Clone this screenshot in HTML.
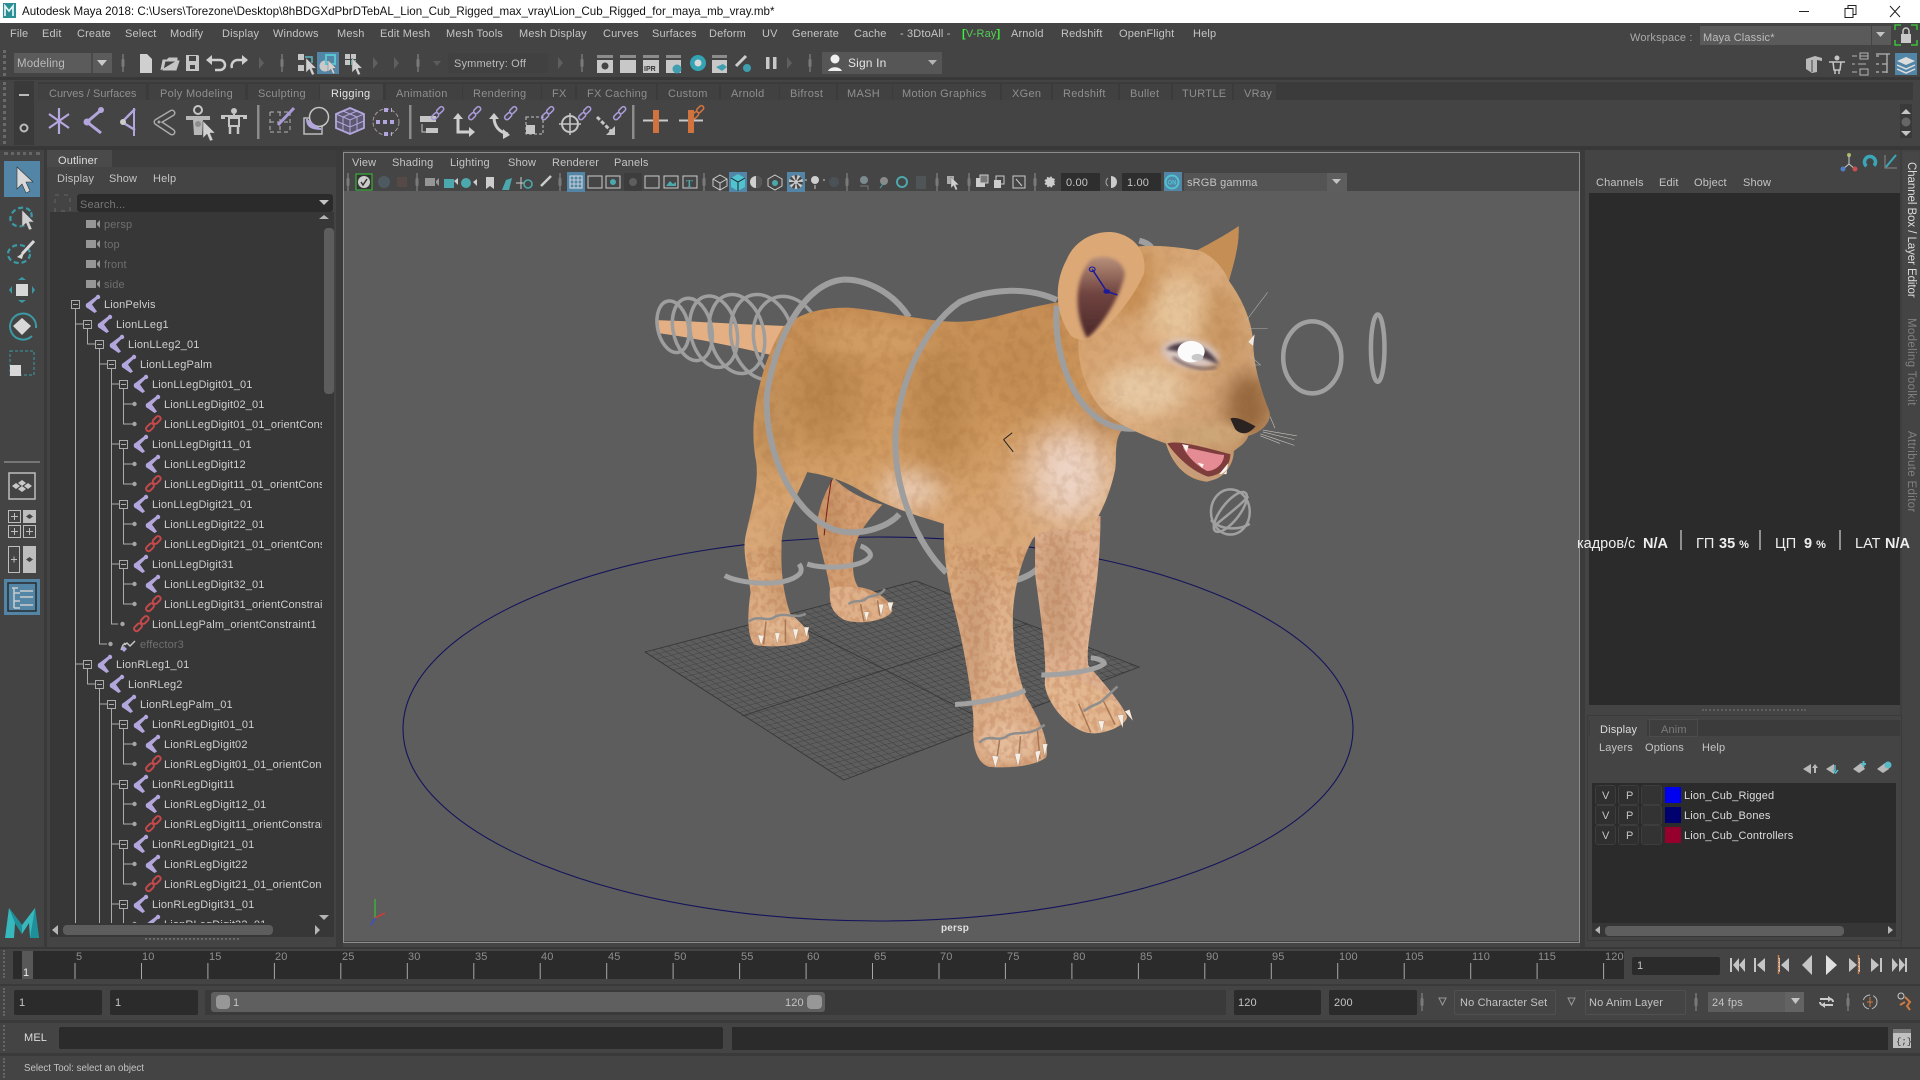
<!DOCTYPE html>
<html><head><meta charset="utf-8"><title>Autodesk Maya 2018</title>
<style>
html,body{margin:0;padding:0;width:1920px;height:1080px;overflow:hidden;background:#444;}
body{position:relative;font:11px/14px "Liberation Sans","Noto Sans CJK SC",sans-serif;color:#c8c8c8}
.b{position:absolute}
.t{position:absolute;white-space:nowrap;font:11px/14px "Liberation Sans","Noto Sans CJK SC",sans-serif;color:#c4c4c4;margin-top:1px;letter-spacing:.15px}
.d{color:#8f8f8f}.v{color:#6f6f6f}
.s{letter-spacing:.3px}
.f{position:absolute;background:#2b2b2b;border-radius:2px}
.h{position:absolute;white-space:nowrap;font:14.5px/18px "Liberation Sans",sans-serif;color:#eee}
.h b{font-weight:bold}
.vt{position:absolute;white-space:nowrap;font:11.5px/14px "Liberation Sans",sans-serif;transform-origin:0 0;transform:rotate(90deg);letter-spacing:.35px}
#tree .t{color:#cfcfcf}
</style></head><body>

<!-- panels -->
<div class="b" style="left:0;top:0;width:1920px;height:23px;background:#fff"></div>
<div class="b" style="left:0;top:77px;width:1920px;height:3px;background:#383838"></div>
<div class="b" style="left:0;top:146px;width:1920px;height:4px;background:#383838"></div>
<div class="b" style="left:14px;top:81px;width:20px;height:64px;background:#3a3a3a"></div>
<div class="b" style="left:3px;top:50px;height:26px;border-left:3px dotted #6a6a6a"></div>
<div class="b" style="left:3px;top:82px;height:62px;border-left:3px dotted #6a6a6a"></div>
<div class="b" style="left:38px;top:82px;width:1875px;height:18px;background:#3b3b3b"></div>
<!-- shelf tabs -->
<div class="b" style="left:38px;top:84px;width:108px;height:16px;background:#414141"></div>
<div class="b" style="left:149px;top:84px;width:96px;height:16px;background:#414141"></div>
<div class="b" style="left:248px;top:84px;width:71px;height:16px;background:#414141"></div>
<div class="b" style="left:320px;top:84px;width:63px;height:16px;background:#474747"></div>
<div class="b" style="left:386px;top:84px;width:76px;height:16px;background:#414141"></div>
<div class="b" style="left:463px;top:84px;width:78px;height:16px;background:#414141"></div>
<div class="b" style="left:542px;top:84px;width:33px;height:16px;background:#414141"></div>
<div class="b" style="left:577px;top:84px;width:79px;height:16px;background:#414141"></div>
<div class="b" style="left:658px;top:84px;width:61px;height:16px;background:#414141"></div>
<div class="b" style="left:721px;top:84px;width:58px;height:16px;background:#414141"></div>
<div class="b" style="left:780px;top:84px;width:56px;height:16px;background:#414141"></div>
<div class="b" style="left:838px;top:84px;width:54px;height:16px;background:#414141"></div>
<div class="b" style="left:893px;top:84px;width:107px;height:16px;background:#414141"></div>
<div class="b" style="left:1002px;top:84px;width:49px;height:16px;background:#414141"></div>
<div class="b" style="left:1053px;top:84px;width:65px;height:16px;background:#414141"></div>
<div class="b" style="left:1120px;top:84px;width:51px;height:16px;background:#414141"></div>
<div class="b" style="left:1173px;top:84px;width:59px;height:16px;background:#414141"></div>
<div class="b" style="left:1234px;top:84px;width:42px;height:16px;background:#414141"></div>

<!-- top controls -->
<div class="b" style="left:14px;top:53px;width:98px;height:20px;background:#5b5b5b"></div>
<div class="b" style="left:91px;top:53px;width:2px;height:20px;background:#4a4a4a"></div>
<div class="b" style="left:448px;top:53px;width:100px;height:20px;background:#414141;border-radius:3px"></div>
<div class="b" style="left:822px;top:52px;width:120px;height:22px;background:#565656"></div>
<div class="b" style="left:317px;top:52px;width:22px;height:22px;background:#5285a6"></div>
<div class="b" style="left:1700px;top:26px;width:191px;height:19px;background:#5a5a5a"></div>
<div class="b" style="left:1871px;top:26px;width:1px;height:19px;background:#444"></div>
<div class="b" style="left:1895px;top:53px;width:22px;height:22px;background:#5285a6"></div>
<div class="b" style="left:1900px;top:104px;width:12px;height:34px;background:#3a3a3a"></div>

<!-- left toolbar + outliner -->
<div class="b" style="left:44px;top:150px;width:3px;height:797px;background:#3a3a3a"></div>
<div class="b" style="left:4px;top:152px;height:3px;width:36px;border-top:3px dotted #666"></div>
<div class="b" style="left:4px;top:161px;width:36px;height:36px;background:#5285a6"></div>
<div class="b" style="left:4px;top:579px;width:36px;height:36px;background:#5285a6"></div>
<div class="b" style="left:4px;top:461px;width:36px;height:2px;background:#777"></div>
<div class="b" style="left:47px;top:150px;width:296px;height:797px;background:#444"></div>
<div class="b" style="left:47px;top:150px;width:65px;height:17px;background:#4a4a4a"></div>
<div class="b" style="left:112px;top:150px;width:224px;height:17px;background:#3d3d3d"></div>
<div class="b" style="left:336px;top:150px;width:7px;height:797px;background:#3b3b3b"></div>
<div class="b" style="left:50px;top:212px;width:284px;height:725px;background:#373737"></div>
<div class="b" style="left:77px;top:194px;width:256px;height:18px;background:#2b2b2b;border-radius:3px"></div>
<div class="b" style="left:324px;top:228px;width:10px;height:166px;background:#5d5d5d;border-radius:4px"></div>
<div class="b" style="left:63px;top:925px;width:210px;height:10px;background:#5d5d5d;border-radius:4px"></div>
<div class="b" style="left:145px;top:938px;width:94px;height:2px;border-top:2px dotted #6a6a6a"></div>

<!-- viewport panel -->
<div class="b" style="left:343px;top:152px;width:1235px;height:789px;border:1px solid #8c8c8c;background:#454545"></div>
<div class="b" style="left:344px;top:191px;width:1235px;height:750px;background:#5d5d5d"></div>
<div class="b" style="left:1580px;top:150px;width:5px;height:797px;background:#3b3b3b"></div>

<!-- right panel -->
<div class="b" style="left:1589px;top:193px;width:311px;height:512px;background:#2b2b2b"></div>
<div class="b" style="left:1900px;top:150px;width:2px;height:797px;background:#3f3f3f"></div>
<div class="b" style="left:1702px;top:709px;width:104px;height:2px;border-top:2px dotted #5f5f5f"></div>
<div class="b" style="left:1588px;top:716px;width:313px;height:224px;background:#444;outline:1px solid #3a3a3a"></div>
<div class="b" style="left:1589px;top:720px;width:311px;height:16px;background:#3b3b3b"></div>
<div class="b" style="left:1590px;top:720px;width:57px;height:16px;background:#444"></div>
<div class="b" style="left:1650px;top:720px;width:47px;height:16px;background:#3e3e3e;outline:1px solid #4c4c4c"></div>
<div class="b" style="left:1592px;top:783px;width:304px;height:140px;background:#2b2b2b"></div>
<div class="b" style="left:1592px;top:923px;width:304px;height:14px;background:#363636"></div>
<div class="b" style="left:1605px;top:926px;width:239px;height:10px;background:#5e5e5e;border-radius:4px"></div>
<div class="b" style="left:1596px;top:786px;width:19px;height:18px;background:#2f2f2f;outline:1px solid #3d3d3d;border-radius:2px"></div>
<div class="b" style="left:1619px;top:786px;width:19px;height:18px;background:#2f2f2f;outline:1px solid #3d3d3d;border-radius:2px"></div>
<div class="b" style="left:1642px;top:786px;width:19px;height:18px;background:#333;outline:1px solid #3d3d3d;border-radius:2px"></div>
<div class="b" style="left:1596px;top:806px;width:19px;height:18px;background:#2f2f2f;outline:1px solid #3d3d3d;border-radius:2px"></div>
<div class="b" style="left:1619px;top:806px;width:19px;height:18px;background:#2f2f2f;outline:1px solid #3d3d3d;border-radius:2px"></div>
<div class="b" style="left:1642px;top:806px;width:19px;height:18px;background:#333;outline:1px solid #3d3d3d;border-radius:2px"></div>
<div class="b" style="left:1596px;top:826px;width:19px;height:18px;background:#2f2f2f;outline:1px solid #3d3d3d;border-radius:2px"></div>
<div class="b" style="left:1619px;top:826px;width:19px;height:18px;background:#2f2f2f;outline:1px solid #3d3d3d;border-radius:2px"></div>
<div class="b" style="left:1642px;top:826px;width:19px;height:18px;background:#333;outline:1px solid #3d3d3d;border-radius:2px"></div>
<div class="b" style="left:1665px;top:787px;width:16px;height:16px;background:#0000f0"></div>
<div class="b" style="left:1665px;top:807px;width:16px;height:16px;background:#00006e"></div>
<div class="b" style="left:1665px;top:827px;width:16px;height:16px;background:#96002c"></div>
<div class="b" style="left:1903px;top:152px;width:16px;height:128px;background:#474747"></div>

<!-- bottom -->
<div class="b" style="left:0;top:947px;width:1920px;height:2px;background:#383838"></div>
<div class="b" style="left:0;top:984px;width:1920px;height:2px;background:#3a3a3a"></div>
<div class="b" style="left:0;top:1020px;width:1920px;height:3px;background:#3a3a3a"></div>
<div class="b" style="left:0;top:1053px;width:1920px;height:3px;background:#3a3a3a"></div>
<div class="f" style="left:13px;top:951px;width:1611px;height:28px;border-radius:0"></div>
<div class="b" style="left:22px;top:951px;width:11px;height:28px;background:#585858"></div>
<div class="f" style="left:1632px;top:957px;width:88px;height:18px"></div>
<div class="f" style="left:14px;top:990px;width:88px;height:25px"></div>
<div class="f" style="left:110px;top:990px;width:88px;height:25px"></div>
<div class="b" style="left:205px;top:990px;width:1021px;height:25px;background:#3a3a3a"></div>
<div class="b" style="left:211px;top:992px;width:614px;height:20px;background:#5f5f5f;border-radius:3px"></div>
<div class="b" style="left:216px;top:995px;width:14px;height:14px;background:#979797;border-radius:4px"></div>
<div class="b" style="left:807px;top:995px;width:15px;height:14px;background:#979797;border-radius:4px"></div>
<div class="f" style="left:1234px;top:990px;width:87px;height:25px"></div>
<div class="f" style="left:1329px;top:990px;width:88px;height:25px"></div>
<div class="b" style="left:1454px;top:990px;width:100px;height:23px;border:1px solid #505050;border-radius:2px"></div>
<div class="b" style="left:1585px;top:990px;width:99px;height:23px;border:1px solid #505050;border-radius:2px"></div>
<div class="b" style="left:1708px;top:992px;width:96px;height:20px;background:#5c5c5c"></div>
<div class="b" style="left:1785px;top:992px;width:19px;height:20px;background:#636363"></div>
<div class="f" style="left:59px;top:1027px;width:664px;height:22px"></div>
<div class="f" style="left:732px;top:1027px;width:1156px;height:23px;border-radius:0"></div>
<div class="b" style="left:3px;top:950px;height:28px;border-left:2px dotted #666"></div>
<div class="b" style="left:3px;top:988px;height:28px;border-left:2px dotted #666"></div>
<div class="b" style="left:3px;top:1025px;height:26px;border-left:2px dotted #666"></div>
<div class="b" style="left:3px;top:1058px;height:20px;border-left:2px dotted #666"></div>

<!-- master svg -->
<svg class="b" style="left:0;top:0" width="1920" height="1080" viewBox="0 0 1920 1080" xmlns="http://www.w3.org/2000/svg">
<defs>
<filter id="b4" x="-20%" y="-20%" width="140%" height="140%"><feGaussianBlur stdDeviation="4"/></filter>
<filter id="b8" x="-30%" y="-30%" width="160%" height="160%"><feGaussianBlur stdDeviation="8"/></filter>
<filter id="b20" x="-40%" y="-40%" width="180%" height="180%"><feGaussianBlur stdDeviation="22"/></filter>
<filter id="b40" x="-60%" y="-60%" width="220%" height="220%"><feGaussianBlur stdDeviation="42"/></filter>
<filter id="fur" x="0" y="0" width="100%" height="100%" color-interpolation-filters="sRGB"><feTurbulence type="fractalNoise" baseFrequency=".05 .035" numOctaves="3" seed="7"/><feColorMatrix values="0 0 0 0 .55  0 0 0 0 .33  0 0 0 0 .16  3.6 0 0 0 -1.55"/></filter>
<filter id="fur2" x="0" y="0" width="100%" height="100%" color-interpolation-filters="sRGB"><feTurbulence type="fractalNoise" baseFrequency=".09 .06" numOctaves="2" seed="3"/><feColorMatrix values="0 0 0 0 .66  0 0 0 0 .38  0 0 0 0 .24  5 0 0 0 -2.2"/></filter>
<linearGradient id="bg" x1="0" y1="0" x2="0" y2="1"><stop offset="0" stop-color="#c68f56"/><stop offset=".28" stop-color="#d09a60"/><stop offset=".5" stop-color="#d9a878"/><stop offset=".75" stop-color="#dcae88"/><stop offset="1" stop-color="#d8a882"/></linearGradient>
<linearGradient id="hg" x1="0" y1="0" x2="1" y2="1"><stop offset="0" stop-color="#cf9a62"/><stop offset=".5" stop-color="#dcae80"/><stop offset="1" stop-color="#bf9266"/></linearGradient>
<linearGradient id="eg" x1="0" y1="0" x2="0" y2="1"><stop offset="0" stop-color="#b9907a"/><stop offset=".45" stop-color="#704440"/><stop offset="1" stop-color="#4a2729"/></linearGradient>
<path id="bodyp" d="M295,305 C330,270 370,255 430,255 C500,262 580,290 650,292 C720,295 780,255 870,240 L1000,300 L1000,570 C975,590 985,650 980,680 C970,740 950,800 925,840 C870,830 830,830 810,860 C780,930 765,1030 770,1100 C770,1170 785,1230 795,1270 C830,1340 845,1400 838,1430 C820,1450 770,1460 720,1455 C695,1445 685,1400 688,1350 C690,1300 670,1150 650,1050 C635,980 625,900 627,820 C560,795 500,770 450,730 C410,700 370,690 345,685 C320,760 290,820 292,880 C290,940 295,1000 310,1055 C345,1090 355,1115 345,1125 C320,1140 260,1145 235,1135 C220,1110 222,1050 228,1000 C225,950 210,900 218,850 C230,780 245,720 240,660 C232,610 232,560 240,500 C250,430 265,370 295,305 Z"/>
<path id="headp" d="M1030,95 C1080,90 1120,100 1150,105 C1180,85 1215,60 1235,42 C1237,90 1225,140 1215,185 C1240,230 1260,280 1265,340 C1265,400 1280,470 1298,525 C1305,550 1285,580 1255,590 C1250,610 1235,620 1225,630 C1225,670 1200,700 1170,710 C1130,705 1100,670 1085,610 C1040,590 1000,570 960,530 C920,480 900,400 905,330 C920,200 960,110 1030,95Z"/>
<path id="ffl" d="M815,800 L950,800 C950,880 945,960 935,1040 C930,1100 920,1150 925,1190 C960,1240 1000,1300 1005,1325 C1000,1350 950,1375 920,1365 C880,1350 840,1290 835,1240 C840,1160 825,1050 815,950Z"/>
<path id="fbl" d="M400,700 C430,740 470,760 500,770 C470,810 445,850 440,900 C438,940 440,965 450,985 C490,990 525,1030 520,1050 C505,1075 450,1085 420,1070 C395,1050 390,1030 392,990 C385,930 365,860 365,820 C370,770 385,730 400,700Z"/>
<clipPath id="bc"><use href="#bodyp"/></clipPath>
<clipPath id="hc"><use href="#headp"/></clipPath>
<clipPath id="fc"><use href="#ffl"/><use href="#fbl"/></clipPath>
<clipPath id="gc"><path d="M645,652 L916,581 L1139,667 L844,780Z"/></clipPath>
<pattern id="gp" patternUnits="userSpaceOnUse" width="10" height="10" patternTransform="matrix(.553 .356 .753 -.197 645 652)"><path d="M0 0H10M0 0V10" stroke="#3a3a3a" stroke-width="1.500" fill="none"/></pattern>
<g id="j" fill="#b3a6dc"><path d="M-1 0L9-7.500 11-5.500 5 .5 10 7.500 7.500 9-1 3z"/><circle cx="11" cy="-7" r="2.200"/><circle cx="1.500" cy="1.500" r="2.800"/></g>
<g id="l" fill="none" stroke="#c4494b" stroke-width="2"><rect x="0" y="1" width="9" height="5" rx="2.500" transform="rotate(-45 4 4)"/><rect x="6" y="-6" width="9" height="5" rx="2.500" transform="rotate(-45 10 -4)"/></g>
<g id="pl" fill="none" stroke="#a99ad6" stroke-width="1.600"><rect x="0" y="1" width="8" height="4.500" rx="2.200" transform="rotate(-45 4 3)"/><rect x="5" y="-5" width="8" height="4.500" rx="2.200" transform="rotate(-45 9 -3)"/></g>
<g id="cam" fill="#969696"><rect x="0" y="-4" width="10" height="8"/><path d="M11-1L14-4V4L11 1z"/></g>
<g id="grip" fill="#7a7a7a"><rect x="-.7" y="-9" width="1.400" height="18"/><rect x="-1.500" y="-4" width="3" height="8" rx="1"/></g>
<path id="tri" d="M0-6L5 0 0 6z" fill="#5f5f5f"/>
<path id="ar" d="M0 0L0 17 4 13 7 20 10 19 7 12 12 12z" fill="#d0d0d0" stroke="#555" stroke-width=".5"/>
</defs>

<!-- title bar icon -->
<rect x="3" y="3" width="13" height="15" fill="#2b8f96"/><path d="M5 16V6l4 5 4-5v10" fill="none" stroke="#e6f6f6" stroke-width="1.700"/>
<path d="M1799 11.500H1809" stroke="#222" stroke-width="1"/>
<path d="M1845 8.500h8v9h-8zM1848 8.500v-3h8v9h-3" fill="none" stroke="#222"/>
<path d="M1890 6L1900 17M1900 6L1890 17" stroke="#222"/>

<!-- toolbar row icons -->
<path d="M97 60H107L102 66z" fill="#c9c9c9"/>
<use href="#grip" x="123" y="63"/>
<path d="M140 54h7l5 5v14h-12z" fill="#cfcfcf"/>
<path d="M161 70l2-10h4l2-2h8v3h-12l-2 9h13l3-9h-3" fill="#c5c5c5" stroke="#c5c5c5"/>
<path d="M186 55h12l1 1v15h-13z" fill="#c5c5c5"/><rect x="189" y="56" width="7" height="5" fill="#444"/><rect x="190" y="65" width="5" height="4" fill="#444"/>
<path d="M208 60h12a5 5 0 0 1 0 10h-5" fill="none" stroke="#cfcfcf" stroke-width="2.500"/><path d="M206 60l6-5v10z" fill="#cfcfcf"/>
<path d="M247 60h-9a6 6 0 0 0-6 8" fill="none" stroke="#cfcfcf" stroke-width="2.500"/><path d="M248 60l-6-5v10z" fill="#cfcfcf"/>
<use href="#tri" x="259" y="63"/><use href="#grip" x="282" y="63"/>
<rect x="298" y="54" width="6" height="6" fill="#c5c5c5"/><rect x="298" y="65" width="6" height="6" fill="#c5c5c5"/><path d="M305 57h7v6" fill="none" stroke="#59b9c5" stroke-width="1.500"/>
<use href="#ar" transform="translate(306 58) scale(.85)"/>
<circle cx="325" cy="66" r="5.500" fill="#c9c9c9"/><rect x="326" y="55" width="9" height="9" fill="none" stroke="#59c6cf" stroke-width="2"/><use href="#ar" transform="translate(328 60) scale(.7)"/>
<rect x="345" y="54" width="5" height="5" fill="#c5c5c5"/><rect x="351" y="54" width="5" height="5" fill="#c5c5c5"/><rect x="345" y="60" width="5" height="5" fill="#c5c5c5"/><rect x="351" y="60" width="5" height="5" fill="#6cb"/>
<use href="#ar" transform="translate(352 58) scale(.85)"/>
<use href="#tri" x="373" y="63"/><use href="#tri" x="394" y="63"/><use href="#grip" x="418" y="63"/>
<path d="M433 61h8l-4 5z" fill="#5c5c5c"/>
<use href="#tri" x="558" y="63"/><use href="#grip" x="582" y="63"/>
<g fill="#c8c8c8"><rect x="597" y="60" width="16" height="13"/><rect x="620" y="60" width="16" height="13"/><rect x="643" y="60" width="16" height="13"/><rect x="666" y="60" width="15" height="13"/><rect x="712" y="60" width="15" height="13"/>
<path d="M597 55h16v3h-16zM620 55h16v3h-16zM643 55h16v3h-16zM666 55h15v3h-15zM712 55h15v3h-15z" opacity=".55"/><rect x="766" y="57" width="3.500" height="12"/><rect x="773" y="57" width="3.500" height="12"/></g>
<circle cx="605" cy="66" r="3.500" fill="#444"/><text x="644" y="71" style="font:bold 7px 'Liberation Sans',sans-serif" fill="#333">IPR</text>
<circle cx="677" cy="69" r="4.500" fill="#3f9fae"/>
<circle cx="698" cy="63" r="8" fill="#34a3b3"/><circle cx="698" cy="63" r="3.500" fill="#d8d8d8"/>
<path d="M716 67l7-3 4 3-5 4z" fill="#3f9fae"/>
<path d="M736 66l10-10" stroke="#ccc" stroke-width="3"/><circle cx="747" cy="68" r="4" fill="#3f9fae"/>
<use href="#tri" x="787" y="63"/><use href="#grip" x="810" y="63"/>
<circle cx="835" cy="59" r="4.500" fill="#efefef"/><path d="M828 71c2-5 12-5 14 0z" fill="#efefef"/>
<path d="M928 60h9l-4.500 5z" fill="#b5b5b5"/>

<!-- right top icons -->
<path d="M1876 32h9l-4.500 5z" fill="#c4c4c4"/>
<path d="M1895 30v-5h6M1917 30v-5h-6M1895 40v5h6M1917 40v5h-6" fill="none" stroke="#3ed23e" stroke-width="1.300"/>
<rect x="1901" y="34" width="10" height="9" fill="#c9c9c9"/><path d="M1903 34v-3a3 3 0 0 1 6 0v3" fill="none" stroke="#c9c9c9" stroke-width="1.500"/>
<path d="M1806 59l9-3 7 2v3l-5-1v12l-5 1-6-4z" fill="#b9b9b9"/><path d="M1812 60v12" stroke="#444"/>
<circle cx="1837" cy="58" r="2.500" fill="#c5c5c5"/><path d="M1829 62h16M1833 62l1 8h6l1-8M1835 70v4M1839 70v4" fill="none" stroke="#c5c5c5" stroke-width="1.500"/>
<path d="M1852 56h5M1860 56h8M1860 53h8v6h-8zM1852 64h3M1858 64h8M1852 72h5M1860 69h8v6h-8z" stroke="#b5b5b5" fill="none"/>
<path d="M1876 54h14l-3 0v19M1876 56h3M1876 64h3M1876 72h3M1882 64h5M1882 72h5" stroke="#b5b5b5" fill="none" stroke-width="1.300"/>
<path d="M1906 57l9 4-9 4-9-4z" fill="#ddd"/><path d="M1897 65l9 4 9-4M1897 69l9 4 9-4" fill="none" stroke="#ddd" stroke-width="1.500"/>
<path d="M1906 109l5 5h-10zM1906 136l5-5h-10z" fill="#c5c5c5"/><circle cx="1906" cy="122" r="4.500" fill="#666"/>

<!-- shelf left -->
<rect x="19" y="94" width="10" height="2" fill="#bbb"/>
<circle cx="24" cy="128" r="3.500" fill="none" stroke="#bbb" stroke-width="2"/>
<!-- shelf icons -->
<path d="M59 108V134M49 114L69 128M69 114L49 128" stroke="#b5a6e0" stroke-width="2.200"/>
<path d="M100 111L87 122 101 133" fill="none" stroke="#b3a6dc" stroke-width="3"/><circle cx="101" cy="110" r="3" fill="#b3a6dc"/><circle cx="87" cy="122" r="3.500" fill="#b3a6dc"/>
<path d="M135 109L122 122 135 130" fill="none" stroke="#b3a6dc" stroke-width="2.400"/><path d="M134 108V136" stroke="#b3a6dc" stroke-width="2"/><circle cx="123" cy="122" r="3" fill="#ccc"/>
<path d="M172 113L157 122 172 132" fill="none" stroke="#aaa" stroke-width="7" stroke-linejoin="round" stroke-linecap="round"/><path d="M172 113L157 122 172 132" fill="none" stroke="#444" stroke-width="4" stroke-linejoin="round" stroke-linecap="round"/><circle cx="159" cy="122" r="1.500" fill="#aaa"/>
<circle cx="198" cy="110" r="4" fill="none" stroke="#c5c5c5" stroke-width="2"/><path d="M186 116h24v4h-7l-1 15h-8l-1-15h-7z" fill="#b7b7b7"/><circle cx="198" cy="124" r="3" fill="#8d8d8d"/>
<use href="#ar" transform="translate(203 121)"/>
<circle cx="234" cy="111" r="3" fill="#c5c5c5"/><path d="M222 116h24M234 114v4" stroke="#c5c5c5" stroke-width="2"/><rect x="229" y="118" width="10" height="8" fill="none" stroke="#c5c5c5" stroke-width="2"/><path d="M230 126v8M238 126v8" stroke="#c5c5c5" stroke-width="2.500"/><rect x="221" y="115" width="4" height="4" fill="#c5c5c5"/><rect x="243" y="115" width="4" height="4" fill="#c5c5c5"/>
<rect x="257" y="105" width="2.500" height="34" fill="#8c8c8c"/>
<path d="M270 112h20M270 122h20M270 132h20M270 112v20M280 112v20M290 112v20" stroke="#b5b5b5" stroke-dasharray="4 3" fill="none"/><path d="M278 125L294 108" stroke="#a99ad6" stroke-width="3"/>
<rect x="304" y="118" width="18" height="16" fill="none" stroke="#bbb" stroke-width="1.500"/><circle cx="319" cy="117" r="9.500" fill="#444" stroke="#c5c5c5" stroke-width="1.500"/><path d="M307 119c0 7 4 10 14 10" fill="#b3a6dc" stroke="#b3a6dc" stroke-width="2"/>
<path d="M350 108l14 6v14l-14 6-14-6v-14z" fill="#5c5870" stroke="#b3a6dc" stroke-width="1.800"/><path d="M336 114l14 6 14-6M350 120v14M336 121l14 6 14-6M343 111l14 6v14M357 111l-14 6v14" fill="none" stroke="#b3a6dc" stroke-width="1"/>
<circle cx="386" cy="122" r="13" fill="none" stroke="#a99" stroke-width="1" stroke-dasharray="4 2"/><path d="M384 110h8M376 122h20M384 134h8" stroke="#b3a6dc" stroke-width="4" stroke-dasharray="4 3"/>
<rect x="409" y="105" width="2.500" height="34" fill="#8c8c8c"/>
<rect x="420" y="116" width="16" height="6" fill="#c5c5c5"/><rect x="426" y="128" width="12" height="5" fill="#c5c5c5"/><path d="M422 124v8h4" fill="none" stroke="#c5c5c5"/><use href="#pl" transform="translate(431 113)"/>
<path d="M458 115v17h14" fill="none" stroke="#cfcfcf" stroke-width="3"/><path d="M458 113l-5 6h10zM475 132l-6-5v10z" fill="#cfcfcf"/><use href="#pl" transform="translate(468 113)"/>
<path d="M494 117c0 9 5 15 14 17" fill="none" stroke="#cfcfcf" stroke-width="3"/><path d="M494 113l-5 6h10zM510 135l-7-6v10z" fill="#cfcfcf"/><use href="#pl" transform="translate(504 113)"/>
<rect x="526" y="117" width="17" height="17" fill="none" stroke="#c5c5c5" stroke-dasharray="3 2"/><rect x="526" y="125" width="9" height="9" fill="#c5c5c5"/><use href="#pl" transform="translate(541 113)"/>
<circle cx="570" cy="124" r="8" fill="none" stroke="#c5c5c5" stroke-width="2"/><path d="M570 113v22M559 124h22" stroke="#c5c5c5" stroke-width="1.500"/><use href="#pl" transform="translate(578 113)"/>
<path d="M597 117l14 14" stroke="#c5c5c5" stroke-width="3" stroke-dasharray="4 2"/><path d="M615 135h-9l9-9z" fill="#c5c5c5"/><use href="#pl" transform="translate(613 113)"/>
<rect x="632" y="105" width="2.500" height="34" fill="#8c8c8c"/>
<path d="M643 120.500h25M679 120.500h24" stroke="#c9c9c9" stroke-width="2"/><rect x="653" y="110" width="6" height="23" fill="#d0733f"/><rect x="688" y="110" width="6" height="23" fill="#d0733f"/><g transform="translate(691 112)"><rect x="0" y="1" width="8" height="4.500" rx="2.200" transform="rotate(-45 4 3)" fill="none" stroke="#d0733f" stroke-width="1.600"/><rect x="5" y="-5" width="8" height="4.500" rx="2.200" transform="rotate(-45 9 -3)" fill="none" stroke="#d0733f" stroke-width="1.600"/></g>

<!-- left tools -->
<path d="M17 167L17 189 22 184 26 193 30 191 26 182 33 182z" fill="#d8d8d8" stroke="#333" stroke-width=".6"/>
<ellipse cx="21" cy="217" rx="11" ry="9" fill="none" stroke="#3b9aa5" stroke-width="2.200" stroke-dasharray="5 3" transform="rotate(-25 21 217)"/><use href="#ar" transform="translate(22 210)"/>
<ellipse cx="19" cy="254" rx="11" ry="9" fill="none" stroke="#3b9aa5" stroke-width="2.200" stroke-dasharray="5 3"/><path d="M34 241L22 254" stroke="#d8d8d8" stroke-width="3"/><path d="M24 252l-7 5 5 2z" fill="#d8d8d8"/>
<rect x="16" y="284" width="12" height="12" fill="#d8d8d8"/><path d="M22 277l4 3h-8zM22 303l4-3h-8zM9 290l3-4v8zM35 290l-3-4v8z" fill="#3b9aa5"/>
<path d="M22 318l9 8-9 9-9-9z" fill="#d8d8d8"/><path d="M32 336a13 13 0 1 1 4-8" fill="none" stroke="#3b9aa5" stroke-width="2"/>
<rect x="10" y="351" width="24" height="24" fill="none" stroke="#3b9aa5" stroke-dasharray="3 2"/><rect x="10" y="365" width="11" height="11" fill="#d8d8d8"/>
<rect x="9" y="473" width="26" height="26" fill="none" stroke="#bdbdbd" stroke-width="1.500"/><rect x="12" y="476" width="20" height="20" fill="#444"/><path d="M22 480l4 3-4 3-4-3zM16 483l4 3-4 3-4-3zM28 483l4 3-4 3-4-3zM22 486l4 3-4 3-4-3z" fill="#c9c9c9"/>
<g fill="none" stroke="#bdbdbd"><rect x="8.500" y="510.500" width="12" height="12"/><rect x="8.500" y="525.500" width="12" height="12"/><rect x="23.500" y="525.500" width="12" height="12"/><path d="M11 516.500h7M14.500 513v7M11 531.500h7M14.500 528v7M26 531.500h7M29.500 528v7"/><rect x="8.500" y="546.500" width="11" height="26"/><path d="M11 559.500h6M14 556.500v6"/></g>
<rect x="23" y="510" width="13" height="13" fill="#bdbdbd"/><path d="M29.500 514l3.500 2.500-3.500 2.500-3.500-2.500z" fill="#444"/>
<rect x="23" y="546" width="13" height="27" fill="#bdbdbd"/><path d="M29.500 557l3.500 2.500-3.500 2.500-3.500-2.500z" fill="#444"/>
<rect x="8" y="583" width="28" height="28" fill="none" stroke="#2b2b2b" stroke-width="1.500"/><path d="M12 588h6M14 588v20M14 593h6M14 601h6M14 608h6M20 591h13M20 597h13M20 605h13" stroke="#ccc" stroke-width="1.500" fill="none"/>
<!-- Maya logo -->
<path d="M5 938L9 908 22 925 35 908 39 938 30 938 29 923 22 934 15 923 14 938z" fill="#37b8bd"/><path d="M9 908L22 925 22 934 15 923zM35 908L30 938 39 938z" fill="#1f8f9a"/>

<!-- outliner search icon, arrows -->
<path d="M55 195h15v16h-15z" fill="none" stroke="#666" stroke-dasharray="4 5"/>
<path d="M319 200h10l-5 5z" fill="#c4c4c4"/>
<path d="M329 219l-5-4-5 4z" fill="#b5b5b5"/>
<path d="M329 915l-5 5-5-5z" fill="#b5b5b5"/>
<path d="M52 930l6-5v10z" fill="#b5b5b5"/><path d="M320 930l-5-5v10z" fill="#b5b5b5"/>

<!-- viewport toolbar -->
<use href="#grip" x="348" y="182"/>
<rect x="356" y="174" width="16" height="16" fill="#353535" stroke="#39c339"/><circle cx="364" cy="182" r="6" fill="#ccc"/><path d="M361 182l2 3 4-6" stroke="#333" fill="none" stroke-width="1.500"/>
<circle cx="384" cy="182" r="6" fill="#4e5a62"/><rect x="397" y="177" width="10" height="10" fill="#554a46"/>
<use href="#grip" x="417" y="182"/>
<use href="#cam" x="425" y="182"/>
<rect x="444" y="179" width="10" height="9" fill="#4ca8ac"/><path d="M454 181l4-3v7z" fill="#ccc"/>
<circle cx="466" cy="183" r="5" fill="#4ca8ac"/><path d="M473 182l4-3v7z" fill="#ccc"/>
<path d="M486 177h8v12l-4-3-4 3z" fill="#ccc"/>
<path d="M502 190l4-10 6-2-3 12z" fill="#4ca8ac"/><path d="M521 177v12M516 183h9" stroke="#ccc"/><circle cx="528" cy="184" r="4" fill="none" stroke="#4ca8ac" stroke-width="1.600"/>
<path d="M541 186l10-10" stroke="#ccc" stroke-width="2.500"/>
<use href="#grip" x="560" y="182"/>
<rect x="567" y="172" width="18" height="20" fill="#5285a6"/><rect x="570" y="176" width="12" height="12" fill="none" stroke="#e0e0e0"/><path d="M574 176v12M578 176v12M570 180h12M570 184h12" stroke="#e0e0e0" stroke-width=".8"/>
<rect x="588" y="176" width="14" height="12" fill="none" stroke="#ccc"/><rect x="606" y="176" width="14" height="12" fill="none" stroke="#ccc"/><circle cx="613" cy="182" r="3" fill="#4ca8ac"/>
<rect x="624" y="173" width="18" height="18" fill="#3d3d3d"/><circle cx="633" cy="182" r="4" fill="#5e5e5e"/>
<rect x="645" y="176" width="14" height="12" fill="none" stroke="#ccc"/><rect x="664" y="176" width="14" height="12" fill="none" stroke="#ccc"/><path d="M666 186l4-5 3 3 3-2v4z" fill="#4ca8ac"/>
<rect x="683" y="176" width="14" height="12" fill="none" stroke="#ccc"/><text x="686" y="187" style="font:bold 10px 'Liberation Serif',serif" fill="#4ca8ac">T</text>
<use href="#grip" x="704" y="182"/>
<path d="M720 175l7 4v7l-7 4-7-4v-7z" fill="none" stroke="#ccc"/><path d="M713 179l7 4 7-4M720 183v7" fill="none" stroke="#ccc"/>
<rect x="729" y="172" width="18" height="20" fill="#5285a6"/><path d="M738 174l7 4v9l-7 4-7-4v-9z" fill="#4fc3cf"/><path d="M731 178l7 4 7-4M738 182v9" fill="none" stroke="#222"/>
<circle cx="756" cy="182" r="6" fill="#cfcfcf"/><path d="M756 176a6 6 0 0 1 0 12z" fill="#555"/>
<path d="M775 175l7 4v7l-7 4-7-4v-7z" fill="none" stroke="#ccc"/><circle cx="775" cy="183" r="3" fill="#4ca8ac"/>
<rect x="787" y="172" width="18" height="20" fill="#5285a6"/><circle cx="796" cy="182" r="7" fill="#c8c8c8"/><circle cx="796" cy="182" r="4.500" fill="none" stroke="#444" stroke-dasharray="2 2" stroke-width="5"/>
<circle cx="815" cy="180" r="4" fill="#cfcfcf"/><path d="M815 185v4M807 180h-2M823 180h2" stroke="#cfcfcf"/>
<circle cx="834" cy="182" r="5" fill="#4a5258"/><use href="#grip" x="847" y="182"/>
<circle cx="864" cy="180" r="4" fill="#7c8a90"/><path d="M860 186h8v4" stroke="#777" fill="none"/>
<circle cx="884" cy="181" r="4" fill="#8a8a8a"/><path d="M880 188l4-5" stroke="#4ca8ac"/>
<circle cx="902" cy="182" r="5" fill="none" stroke="#4ca8ac" stroke-width="2"/>
<rect x="916" y="176" width="10" height="13" fill="#4f5557"/><use href="#grip" x="937" y="182"/>
<rect x="947" y="176" width="7" height="8" fill="#aaa"/><use href="#ar" transform="translate(951 177) scale(.65)"/>
<use href="#grip" x="969" y="182"/>
<rect x="976" y="178" width="9" height="9" fill="#ccc"/><rect x="980" y="175" width="8" height="8" fill="#777" stroke="#ccc"/>
<rect x="994" y="180" width="7" height="8" fill="#ccc"/><path d="M996 180v-4h8v8h-3" fill="none" stroke="#ccc"/>
<rect x="1013" y="176" width="12" height="12" fill="none" stroke="#ccc"/><path d="M1016 179l6 7" stroke="#ccc"/><use href="#grip" x="1035" y="182"/>
<circle cx="1050" cy="182" r="5.500" fill="#ccc"/><circle cx="1050" cy="182" r="5.500" fill="none" stroke="#444" stroke-dasharray="2 2" stroke-width="2"/>
<path d="M1111 176a6 6 0 0 1 0 12z" fill="#ccc"/><path d="M1108 178a5 5 0 0 0 0 8" fill="none" stroke="#aaa"/>
<rect x="1164" y="172" width="18" height="19" fill="#5285a6"/><circle cx="1172" cy="182" r="6.500" fill="none" stroke="#4fc3cf" stroke-width="2"/><text x="1167.500" y="184.500" style="font:bold 6px 'Liberation Sans',sans-serif" fill="#4fc3cf">ON</text>
<rect x="1061" y="173" width="39" height="18" fill="#2e2e2e"/><rect x="1122" y="173" width="39" height="18" fill="#2e2e2e"/>
<rect x="1184" y="173" width="163" height="18" fill="#545454"/><rect x="1327" y="173" width="20" height="18" fill="#5e5e5e"/><path d="M1332 179h9l-4.500 5z" fill="#c4c4c4"/>

<!-- right panel icons -->
<circle cx="1849" cy="155" r="2" fill="#a5b95d"/><path d="M1849 155v9l-6 5M1849 164l6 5" stroke="#ccc" fill="none"/><circle cx="1843" cy="169" r="2.500" fill="#4f7fc8"/><circle cx="1855" cy="169" r="2.500" fill="#c84f4f"/>
<circle cx="1870" cy="162" r="5.500" fill="none" stroke="#3aa6b7" stroke-width="3.500" stroke-dasharray="26 9" transform="rotate(130 1870 162)"/>
<path d="M1886 167L1896 155" stroke="#3aa6b7" stroke-width="2"/><path d="M1885 155v13h12" fill="none" stroke="#888"/>
<!-- layer icons -->
<path d="M1803 769l8-5v10z M1814 767h2v6h-2zM1812 768l3-4 3 4z" fill="#b8b8b8"/>
<path d="M1826 769l8-5v10z" fill="#b8b8b8"/><path d="M1835 765v6M1833 770l2.500 3 2.500-3" stroke="#59b9c5" fill="none" stroke-width="1.500"/>
<path d="M1853 769l8-6 4 6-6 4z" fill="#b8b8b8"/><path d="M1866 764h-5M1863.500 761v6" stroke="#59b9c5" stroke-width="2"/>
<path d="M1877 769l8-6 4 6-6 4z" fill="#b8b8b8"/><circle cx="1888" cy="765" r="3.500" fill="#59b9c5"/>
<path d="M1595 930l5-4v8zM1893 930l-5-4v8z" fill="#b5b5b5"/>

<!-- timeline ticks -->
<path d="M75 963V979M141.500 963V979M207.900 963V979M274.400 963V979M340.800 963V979M407.300 963V979M473.800 963V979M540.200 963V979M606.700 963V979M673.100 963V979M739.600 963V979M806.100 963V979M872.500 963V979M939 963V979M1005.400 963V979M1071.900 963V979M1138.400 963V979M1204.800 963V979M1271.300 963V979M1337.700 963V979M1404.200 963V979M1470.700 963V979M1537.100 963V979M1603.600 963V979" stroke="#a8a8a8" fill="none"/>
<!-- playback -->
<g fill="#c5c5c5">
<path d="M1730 958h2v14h-2zM1739 958v14l-6-7zM1745 958v14l-6-7z"/>
<path d="M1754 958h2v14h-2zM1765 958v14l-8-7z"/>
<path d="M1778 958h2v14h-2zM1789 958v14l-8-7z"/>
<path d="M1812 955v20l-10-10z"/><path d="M1826 955v20l11-10z" fill="#e0e0e0"/>
<path d="M1849 958v14l8-7zM1858 958h2v14h-2z"/>
<path d="M1871 958v14l8-7zM1880 958h2v14h-2z"/>
<path d="M1892 958v14l6-7zM1899 958v14l6-7zM1905 958h2v14h-2z"/>
</g>
<path d="M1778.500 955v20M1858.500 955v20" stroke="#d17b3e" stroke-width="1.500" stroke-dasharray="3 1"/>
<use href="#grip" x="1422" y="1002"/><use href="#grip" x="1696" y="1002"/><use href="#grip" x="1848" y="1002"/>
<path d="M1439 998h7l-3.500 7z M1568 998h7l-3.500 7z" fill="none" stroke="#999"/>
<path d="M1791 998h9l-4.500 6z" fill="#c5c5c5"/>
<path d="M1820 999h10a3 3 0 0 1 3 3M1833 1005h-10a3 3 0 0 1-3-3" fill="none" stroke="#ccc" stroke-width="2"/><path d="M1828 996l4 3-4 3zM1825 1002l-4 3 4 3z" fill="#ccc"/>
<circle cx="1870" cy="1002" r="7" fill="none" stroke="#bbb" stroke-dasharray="9 3"/><path d="M1870 997v10M1867 1002h6" stroke="#d17b3e"/>
<circle cx="1901" cy="996" r="3" fill="none" stroke="#ccc"/><path d="M1905 997l5 5-3 4 3 4M1905 1002l-5 3" stroke="#d17b3e" stroke-width="2" fill="none"/>
<rect x="1893" y="1029" width="18" height="19" fill="#c0c0c0"/><rect x="1893" y="1029" width="18" height="4" fill="#777"/><text x="1896" y="1044" style="font:9px 'Liberation Mono',monospace" fill="#333">{;}</text>

<!-- ===================== 3D viewport ===================== -->
<ellipse cx="878" cy="729" rx="475" ry="192" fill="none" stroke="#14145c" stroke-width="1.100"/>
<g clip-path="url(#gc)"><rect x="640" y="575" width="505" height="210" fill="url(#gp)"/></g>
<path d="M645 652L916 581 1139 667 844 780Z M780 616.500L992 724 M742 716L1027 624" fill="none" stroke="#383838" stroke-width=".9"/>

<g transform="translate(640,210) scale(.4847,.3827)">
<!-- behind rings -->
<g fill="none" stroke="#9e9e9e" stroke-width="6">
<path vector-effect="non-scaling-stroke" d="M1030,80 C1045,85 1060,95 1055,110"/>
<path vector-effect="non-scaling-stroke" d="M765,970 C790,965 810,950 822,935"/>
<path vector-effect="non-scaling-stroke" d="M555,280 C520,210 460,180 420,182"/>
</g>
<!-- tail -->
<path d="M38,288 C100,290 200,298 300,303 L275,380 C180,352 100,332 40,322Z" fill="#e4b083"/>
<!-- tail rings -->
<g fill="none" stroke="#9e9e9e" stroke-width="3.500">
<ellipse vector-effect="non-scaling-stroke" cx="68" cy="305" rx="32" ry="68" transform="rotate(-8 68 305)"/>
<ellipse vector-effect="non-scaling-stroke" cx="108" cy="312" rx="40" ry="82" transform="rotate(-8 108 312)"/>
<ellipse vector-effect="non-scaling-stroke" cx="152" cy="318" rx="48" ry="94" transform="rotate(-8 152 318)"/>
<ellipse vector-effect="non-scaling-stroke" cx="200" cy="324" rx="56" ry="104" transform="rotate(-8 200 324)"/>
<ellipse vector-effect="non-scaling-stroke" cx="252" cy="332" rx="64" ry="112" transform="rotate(-8 252 332)"/>
<ellipse vector-effect="non-scaling-stroke" cx="305" cy="340" rx="70" ry="115" transform="rotate(-8 305 340)"/>
</g>
<!-- far legs -->
<use href="#fbl" fill="#d29e72"/>
<path d="M392,990 C420,975 470,985 520,1045 C505,1075 450,1085 420,1070 C395,1050 390,1030 392,990Z" fill="#dfb18a"/>
<use href="#ffl" fill="#deb291"/>
<path d="M835,1230 C880,1200 960,1240 1005,1325 C1000,1350 950,1375 920,1365 C880,1350 840,1290 835,1230Z" fill="#e3b78f"/>
<g clip-path="url(#fc)">
<ellipse cx="860" cy="1000" rx="30" ry="170" fill="#b98a64" filter="url(#b20)" opacity=".6"/>
<ellipse cx="390" cy="820" rx="22" ry="100" fill="#b58452" filter="url(#b20)" opacity=".6"/>
<rect x="360" y="700" width="660" height="680" filter="url(#fur2)" opacity=".22"/>
</g>
<path d="M395,705 C390,740 385,790 380,850" stroke="#7a1a1a" fill="none" stroke-width="1" vector-effect="non-scaling-stroke"/>
<!-- main body -->
<use href="#bodyp" fill="url(#bg)"/>
<g clip-path="url(#bc)">
<ellipse cx="885" cy="690" rx="85" ry="130" fill="#eed6c8" filter="url(#b40)"/>
<ellipse cx="740" cy="1180" rx="50" ry="200" fill="#e0b590" filter="url(#b20)" opacity=".8"/>
<ellipse cx="560" cy="730" rx="60" ry="55" fill="#e8c8ad" filter="url(#b20)"/>
<ellipse cx="380" cy="480" rx="55" ry="150" fill="#b58248" filter="url(#b40)"/>
<ellipse cx="620" cy="520" rx="45" ry="180" fill="#b5824a" filter="url(#b40)"/>
<ellipse cx="780" cy="430" rx="60" ry="120" fill="#bd8850" filter="url(#b40)" opacity=".8"/>
<ellipse cx="270" cy="560" rx="30" ry="130" fill="#bc8c58" filter="url(#b20)" opacity=".8"/>
<ellipse cx="480" cy="340" rx="120" ry="50" fill="#d6a26a" filter="url(#b20)" opacity=".7"/>
<ellipse cx="965" cy="545" rx="45" ry="50" fill="#b98a5e" filter="url(#b20)" opacity=".7"/>
<ellipse cx="300" cy="950" rx="26" ry="120" fill="#bf8f62" filter="url(#b20)" opacity=".6"/>
<ellipse cx="690" cy="1100" rx="25" ry="190" fill="#c29470" filter="url(#b20)" opacity=".7"/>
<ellipse cx="760" cy="1390" rx="60" ry="50" fill="#e7c1a0" filter="url(#b8)" opacity=".8"/>
<ellipse cx="285" cy="1090" rx="50" ry="35" fill="#e2b892" filter="url(#b8)" opacity=".8"/>
<rect x="220" y="240" width="800" height="700" filter="url(#fur)" opacity=".13"/>
<rect x="220" y="880" width="800" height="590" filter="url(#fur2)" opacity=".22"/>
</g>
<path d="M750,600 L768,582 M750,600 L770,632" stroke="#222" stroke-width="1" fill="none" vector-effect="non-scaling-stroke"/>
<!-- toes -->
<g fill="none" stroke="#9b6b48" stroke-width="1.500" opacity=".8">
<path vector-effect="non-scaling-stroke" d="M742,1385L735,1445M785,1375L780,1450M820,1360L825,1435"/>
<path vector-effect="non-scaling-stroke" d="M260,1075L255,1135M300,1070L300,1130"/>
<path vector-effect="non-scaling-stroke" d="M455,1030L462,1075M490,1020L495,1060"/>
<path vector-effect="non-scaling-stroke" d="M905,1290L930,1365M955,1280L980,1345"/>
</g>
<!-- claws -->
<g fill="#f6eee4" stroke="#7a5a40" stroke-width=".5">
<path d="M726,1425L733,1458 740,1428Z M773,1420L780,1456 786,1420Z M815,1415L820,1446 827,1412Z M830,1395L835,1428 841,1395Z"/>
<path d="M243,1110L250,1138 256,1112Z M278,1105L283,1135 289,1105Z M315,1095L321,1125 327,1095Z M338,1090L343,1118 349,1090Z"/>
<path d="M462,1050L467,1076 473,1050Z M492,1030L497,1063 503,1030Z M510,1025L516,1052 523,1025Z"/>
<path d="M945,1335L953,1366 958,1335Z M985,1320L996,1354 998,1318Z M1000,1310L1017,1335 1010,1305Z"/>
</g>
<!-- gray rings -->
<g fill="none" stroke="#9e9e9e" stroke-width="6">
<path vector-effect="non-scaling-stroke" d="M420,182 C340,190 280,330 262,480 C255,620 310,790 400,835 C450,855 510,830 535,795"/>
<path vector-effect="non-scaling-stroke" d="M860,235 C800,200 720,205 660,240 C580,310 530,470 527,600 C525,730 570,870 632,948"/>
<path vector-effect="non-scaling-stroke" d="M860,250 C853,350 880,480 940,540 C970,570 1000,575 1030,570"/>
</g>
<g fill="none" stroke="#a2a2a2" stroke-width="5">
<path vector-effect="non-scaling-stroke" d="M175,955 C200,975 300,990 330,950 C335,940 332,932 328,925"/>
<path vector-effect="non-scaling-stroke" d="M345,925 C380,940 460,935 475,905 C478,895 465,882 455,878"/>
<path vector-effect="non-scaling-stroke" d="M828,1215 C870,1215 940,1205 958,1185 C958,1178 945,1172 930,1170"/>
<path vector-effect="non-scaling-stroke" d="M650,1292 C690,1290 760,1275 795,1255"/>
</g>
<g fill="none" stroke="#8e8e8e" stroke-width="2.500">
<path vector-effect="non-scaling-stroke" d="M700,1392 C720,1365 740,1395 760,1372 C780,1360 800,1378 835,1345"/>
<path vector-effect="non-scaling-stroke" d="M225,1075 C245,1055 260,1080 280,1062 C300,1050 320,1070 342,1055"/>
<path vector-effect="non-scaling-stroke" d="M430,1030 C445,1015 455,1030 470,1012 C485,1005 495,1010 505,990"/>
<path vector-effect="non-scaling-stroke" d="M915,1310 C935,1290 945,1295 960,1275 L985,1245"/>
</g>
<!-- head -->
<use href="#headp" fill="url(#hg)"/>
<g clip-path="url(#hc)">
<ellipse cx="1110" cy="260" rx="65" ry="85" fill="#e6c49a" filter="url(#b20)"/>
<ellipse cx="1040" cy="470" rx="85" ry="65" fill="#e6c8a2" filter="url(#b20)"/>
<ellipse cx="1010" cy="190" rx="50" ry="90" fill="#c48a50" filter="url(#b20)" opacity=".85"/>
<ellipse cx="1200" cy="300" rx="35" ry="110" fill="#c39058" filter="url(#b20)" opacity=".8"/>
<ellipse cx="1255" cy="510" rx="45" ry="85" fill="#96683c" filter="url(#b20)"/>
<ellipse cx="1170" cy="585" rx="85" ry="28" fill="#cda677" filter="url(#b8)"/>
<rect x="900" y="40" width="410" height="680" filter="url(#fur)" opacity=".08"/>
<path d="M1150,105 C1180,85 1215,60 1235,42 C1237,90 1225,140 1215,185 C1200,140 1170,110 1150,105Z" fill="#c58e54"/>
</g>
<!-- eye -->
<ellipse cx="1135" cy="375" rx="60" ry="36" fill="#d9c8c2" filter="url(#b8)" transform="rotate(15 1135 375)"/>
<path d="M1085,365 C1105,335 1170,340 1195,405 C1165,385 1115,370 1085,365Z" fill="#4f3f48" filter="url(#b4)"/>
<path d="M1100,385 C1125,410 1160,420 1190,410" stroke="#54424a" stroke-width="5" fill="none" filter="url(#b4)"/>
<ellipse cx="1137" cy="370" rx="28" ry="28" fill="#fbfbfb"/>
<ellipse cx="1150" cy="385" rx="12" ry="9" fill="#c8c8c8"/>
<path d="M1255,345 L1268,325 1265,355Z" fill="#f0e8e0"/>
<!-- nose + mouth -->
<path d="M1218,545 C1232,537 1258,558 1270,565 C1255,588 1240,588 1228,573Z" fill="#2a2321"/>
<path d="M1088,610 C1110,600 1170,622 1218,638 C1218,665 1203,692 1172,697 C1140,682 1110,650 1088,610Z" fill="#7e3d3c"/>
<path d="M1120,620 C1150,625 1190,640 1205,640 C1205,660 1190,682 1170,682 C1150,670 1130,645 1120,620Z" fill="#e58b93"/>
<path d="M1118,612l10,20 4-17zM1195,690l18-28-3,28zM1150,660l10,14 3-10z" fill="#fbf4ee"/>
<path d="M1090,615 C1100,660 1135,700 1172,708 C1200,705 1222,675 1226,632 C1220,680 1200,698 1172,697 C1140,685 1105,650 1090,615Z" fill="#c69c7a"/>
<!-- ear -->
<path d="M890,330 C860,280 850,200 880,130 C900,70 950,50 985,60 C1030,75 1045,120 1040,165 C1020,230 960,320 925,340 C910,340 900,338 890,330Z" fill="#dba876"/>
<path d="M922,335 C895,270 895,180 930,130 C960,110 1000,130 1000,170 C990,230 950,310 922,335Z" fill="url(#eg)" filter="url(#b4)"/>
<path d="M933,155L963,213M963,213L985,222" stroke="#1a1a9a" stroke-width="1.500" vector-effect="non-scaling-stroke"/>
<ellipse cx="933" cy="155" rx="6" ry="6" fill="none" stroke="#1a1a9a" stroke-width="1" vector-effect="non-scaling-stroke"/>
<ellipse cx="963" cy="213" rx="7" ry="6" fill="#1a1a9a"/>
<!-- whiskers -->
<g stroke="#d9d6cf" stroke-width=".6" fill="none" opacity=".85">
<path vector-effect="non-scaling-stroke" d="M1285,575L1355,590M1285,580L1350,600M1280,585L1350,615M1300,540L1310,570M1280,590L1320,610"/>
<path vector-effect="non-scaling-stroke" d="M1250,290L1295,215M1255,310L1295,310M1258,380L1280,405H1262" stroke="#bbb"/>
<path vector-effect="non-scaling-stroke" d="M970,510L1020,460" stroke-dasharray="3 3"/>
</g>
<!-- side controllers -->
<g fill="none" stroke="#a0a0a0" stroke-width="4.500">
<ellipse vector-effect="non-scaling-stroke" cx="1387" cy="385" rx="60" ry="94"/>
<ellipse vector-effect="non-scaling-stroke" cx="1522" cy="361" rx="14" ry="88"/>
</g>
<g fill="none" stroke="#a0a0a0" stroke-width="2.500">
<ellipse vector-effect="non-scaling-stroke" cx="1218" cy="789" rx="40" ry="59"/>
<ellipse vector-effect="non-scaling-stroke" cx="1218" cy="789" rx="20" ry="59" transform="rotate(30 1218 789)"/>
<path vector-effect="non-scaling-stroke" d="M1185,825 C1200,810 1240,770 1255,748"/>
<path vector-effect="non-scaling-stroke" d="M1178,810 C1200,840 1240,835 1258,820"/>
</g>
</g>
<!-- axis gizmo -->
<path d="M375 918V899" stroke="#3fae3f" stroke-width="1.500"/><path d="M375 918L385 913" stroke="#d43a3a" stroke-width="1.500"/><path d="M375 918L371 925" stroke="#3a4fd4" stroke-width="1.500"/>
</svg>

<!-- title + menu text -->
<div class="t" style="left:22px;top:4px;color:#111;font-size:11.600px;letter-spacing:0">Autodesk Maya 2018: C:\Users\Torezone\Desktop\8hBDGXdPbrDTebAL_Lion_Cub_Rigged_max_vray\Lion_Cub_Rigged_for_maya_mb_vray.mb*</div>
<div class="t" style="left:10px;top:26px">File</div><div class="t" style="left:42px;top:26px">Edit</div><div class="t" style="left:77px;top:26px">Create</div><div class="t" style="left:125px;top:26px">Select</div><div class="t" style="left:170px;top:26px">Modify</div><div class="t" style="left:222px;top:26px">Display</div><div class="t" style="left:273px;top:26px">Windows</div><div class="t" style="left:337px;top:26px">Mesh</div><div class="t" style="left:380px;top:26px">Edit Mesh</div><div class="t" style="left:446px;top:26px">Mesh Tools</div><div class="t" style="left:519px;top:26px">Mesh Display</div><div class="t" style="left:603px;top:26px">Curves</div><div class="t" style="left:652px;top:26px">Surfaces</div><div class="t" style="left:709px;top:26px">Deform</div><div class="t" style="left:762px;top:26px">UV</div><div class="t" style="left:792px;top:26px">Generate</div><div class="t" style="left:854px;top:26px">Cache</div><div class="t" style="left:900px;top:26px">- 3DtoAll -</div>
<div class="t" style="left:962px;top:26px;color:#3cf03c;font-weight:bold">[<span style="color:#58cc58;font-weight:normal">V-Ray</span>]</div>
<div class="t" style="left:1011px;top:26px">Arnold</div><div class="t" style="left:1061px;top:26px">Redshift</div><div class="t" style="left:1119px;top:26px">OpenFlight</div><div class="t" style="left:1193px;top:26px">Help</div>
<div class="t d" style="left:1630px;top:30px;color:#aaa">Workspace :</div><div class="t" style="left:1703px;top:30px;color:#bdbdbd">Maya Classic*</div>
<div class="t" style="left:17px;top:56px;color:#bbb;font-size:11.500px">Modeling</div>
<div class="t" style="left:454px;top:56px;color:#bbb">Symmetry: Off</div>
<div class="t" style="left:848px;top:55px;color:#e4e4e4;font-size:12px">Sign In</div>

<!-- shelf tabs text -->
<div class="t d" style="left:49px;top:86px;letter-spacing:0">Curves / Surfaces</div><div class="t d s" style="left:160px;top:86px">Poly Modeling</div><div class="t d s" style="left:258px;top:86px">Sculpting</div><div class="t s" style="left:331px;top:86px;color:#e4e4e4">Rigging</div><div class="t d s" style="left:396px;top:86px">Animation</div><div class="t d s" style="left:473px;top:86px">Rendering</div><div class="t d s" style="left:552px;top:86px">FX</div><div class="t d s" style="left:587px;top:86px">FX Caching</div><div class="t d s" style="left:668px;top:86px">Custom</div><div class="t d s" style="left:731px;top:86px">Arnold</div><div class="t d s" style="left:790px;top:86px">Bifrost</div><div class="t d s" style="left:847px;top:86px">MASH</div><div class="t d s" style="left:902px;top:86px">Motion Graphics</div><div class="t d s" style="left:1012px;top:86px">XGen</div><div class="t d s" style="left:1063px;top:86px">Redshift</div><div class="t d s" style="left:1130px;top:86px">Bullet</div><div class="t d s" style="left:1182px;top:86px">TURTLE</div><div class="t d s" style="left:1244px;top:86px">VRay</div>

<!-- outliner header -->
<div class="t" style="left:58px;top:153px;color:#dedede">Outliner</div>
<div class="t" style="left:57px;top:171px">Display</div><div class="t" style="left:109px;top:171px">Show</div><div class="t" style="left:153px;top:171px">Help</div>
<div class="t" style="left:80px;top:197px;color:#777">Search...</div>

<!-- outliner tree -->
<div id="tree" class="b" style="left:50px;top:214px;width:272px;height:709px;overflow:hidden">
<svg class="b" style="left:-50px;top:-214px" width="400" height="1080" viewBox="0 0 400 1080">
<path d="M75.500 309V930M75.500 324H83M75.500 664H83M87.500 329V344H95M87.500 669V684H95M99.500 349V644H107M99.500 689V930M99.500 364H107M99.500 704H107M111.500 369V624H118M111.500 709V930M111.500 384H119M111.500 444H119M111.500 504H119M111.500 564H119M111.500 724H119M111.500 784H119M111.500 844H119M111.500 904H119M123.500 389V424H134M123.500 404H134M123.500 449V484H134M123.500 464H134M123.500 509V544H134M123.500 524H134M123.500 569V604H134M123.500 584H134M123.500 729V764H134M123.500 744H134M123.500 789V824H134M123.500 804H134M123.500 849V884H134M123.500 864H134M123.500 909V930M123.500 924H134" stroke="#ababab" fill="none"/>
<g fill="#373737" stroke="#ababab"><rect x="71.500" y="300.500" width="8" height="8"/><rect x="83.500" y="320.500" width="8" height="8"/><rect x="95.500" y="340.500" width="8" height="8"/><rect x="107.500" y="360.500" width="8" height="8"/><rect x="119.500" y="380.500" width="8" height="8"/><rect x="119.500" y="440.500" width="8" height="8"/><rect x="119.500" y="500.500" width="8" height="8"/><rect x="119.500" y="560.500" width="8" height="8"/><rect x="83.500" y="660.500" width="8" height="8"/><rect x="95.500" y="680.500" width="8" height="8"/><rect x="107.500" y="700.500" width="8" height="8"/><rect x="119.500" y="720.500" width="8" height="8"/><rect x="119.500" y="780.500" width="8" height="8"/><rect x="119.500" y="840.500" width="8" height="8"/><rect x="119.500" y="900.500" width="8" height="8"/></g>
<path d="M73 304.500h5M85 324.500h5M97 344.500h5M109 364.500h5M121 384.500h5M121 444.500h5M121 504.500h5M121 564.500h5M85 664.500h5M97 684.500h5M109 704.500h5M121 724.500h5M121 784.500h5M121 844.500h5M121 904.500h5" stroke="#ababab"/>
<g fill="#a5a5a5"><circle cx="134.500" cy="404" r="2.200"/><circle cx="134.500" cy="424" r="2.200"/><circle cx="134.500" cy="464" r="2.200"/><circle cx="134.500" cy="484" r="2.200"/><circle cx="134.500" cy="524" r="2.200"/><circle cx="134.500" cy="544" r="2.200"/><circle cx="134.500" cy="584" r="2.200"/><circle cx="134.500" cy="604" r="2.200"/><circle cx="122.500" cy="624" r="2.200"/><circle cx="110.500" cy="644" r="2.200"/><circle cx="134.500" cy="744" r="2.200"/><circle cx="134.500" cy="764" r="2.200"/><circle cx="134.500" cy="804" r="2.200"/><circle cx="134.500" cy="824" r="2.200"/><circle cx="134.500" cy="864" r="2.200"/><circle cx="134.500" cy="884" r="2.200"/><circle cx="134.500" cy="924" r="2.200"/></g>
<use href="#cam" x="86" y="224"/><use href="#cam" x="86" y="244"/><use href="#cam" x="86" y="264"/><use href="#cam" x="86" y="284"/>
<use href="#j" x="87" y="304"/><use href="#j" x="99" y="324"/><use href="#j" x="111" y="344"/><use href="#j" x="123" y="364"/><use href="#j" x="135" y="384"/><use href="#j" x="147" y="404"/><use href="#j" x="135" y="444"/><use href="#j" x="147" y="464"/><use href="#j" x="135" y="504"/><use href="#j" x="147" y="524"/><use href="#j" x="135" y="564"/><use href="#j" x="147" y="584"/>
<use href="#j" x="99" y="664"/><use href="#j" x="111" y="684"/><use href="#j" x="123" y="704"/><use href="#j" x="135" y="724"/><use href="#j" x="147" y="744"/><use href="#j" x="135" y="784"/><use href="#j" x="147" y="804"/><use href="#j" x="135" y="844"/><use href="#j" x="147" y="864"/><use href="#j" x="135" y="904"/><use href="#j" x="147" y="924"/>
<use href="#l" x="146" y="424"/><use href="#l" x="146" y="484"/><use href="#l" x="146" y="544"/><use href="#l" x="146" y="604"/><use href="#l" x="134" y="624"/><use href="#l" x="146" y="764"/><use href="#l" x="146" y="824"/><use href="#l" x="146" y="884"/>
<path d="M121 650l2-5 4-2 3 3 5-5M124 643l2 2" stroke="#c5c5c5" fill="none" stroke-width="1.500"/><path d="M124 646l3 3-3 3-3-3z" fill="#b3a6dc"/>
</svg>
<div class="t" style="left:54px;top:3px;color:#6f6f6f">persp</div>
<div class="t" style="left:54px;top:23px;color:#6f6f6f">top</div>
<div class="t" style="left:54px;top:43px;color:#6f6f6f">front</div>
<div class="t" style="left:54px;top:63px;color:#6f6f6f">side</div>
<div class="t" style="left:54px;top:83px">LionPelvis</div>
<div class="t" style="left:66px;top:103px">LionLLeg1</div>
<div class="t" style="left:78px;top:123px">LionLLeg2_01</div>
<div class="t" style="left:90px;top:143px">LionLLegPalm</div>
<div class="t" style="left:102px;top:163px">LionLLegDigit01_01</div>
<div class="t" style="left:114px;top:183px">LionLLegDigit02_01</div>
<div class="t" style="left:114px;top:203px">LionLLegDigit01_01_orientConstraint1</div>
<div class="t" style="left:102px;top:223px">LionLLegDigit11_01</div>
<div class="t" style="left:114px;top:243px">LionLLegDigit12</div>
<div class="t" style="left:114px;top:263px">LionLLegDigit11_01_orientConstraint1</div>
<div class="t" style="left:102px;top:283px">LionLLegDigit21_01</div>
<div class="t" style="left:114px;top:303px">LionLLegDigit22_01</div>
<div class="t" style="left:114px;top:323px">LionLLegDigit21_01_orientConstraint1</div>
<div class="t" style="left:102px;top:343px">LionLLegDigit31</div>
<div class="t" style="left:114px;top:363px">LionLLegDigit32_01</div>
<div class="t" style="left:114px;top:383px">LionLLegDigit31_orientConstraint1</div>
<div class="t" style="left:102px;top:403px">LionLLegPalm_orientConstraint1</div>
<div class="t" style="left:90px;top:423px;color:#6f6f6f">effector3</div>
<div class="t" style="left:66px;top:443px">LionRLeg1_01</div>
<div class="t" style="left:78px;top:463px">LionRLeg2</div>
<div class="t" style="left:90px;top:483px">LionRLegPalm_01</div>
<div class="t" style="left:102px;top:503px">LionRLegDigit01_01</div>
<div class="t" style="left:114px;top:523px">LionRLegDigit02</div>
<div class="t" style="left:114px;top:543px">LionRLegDigit01_01_orientConstraint1</div>
<div class="t" style="left:102px;top:563px">LionRLegDigit11</div>
<div class="t" style="left:114px;top:583px">LionRLegDigit12_01</div>
<div class="t" style="left:114px;top:603px">LionRLegDigit11_orientConstraint1</div>
<div class="t" style="left:102px;top:623px">LionRLegDigit21_01</div>
<div class="t" style="left:114px;top:643px">LionRLegDigit22</div>
<div class="t" style="left:114px;top:663px">LionRLegDigit21_01_orientConstraint1</div>
<div class="t" style="left:102px;top:683px">LionRLegDigit31_01</div>
<div class="t" style="left:114px;top:703px">LionRLegDigit32_01</div>
</div>

<!-- viewport text -->
<div class="t" style="left:352px;top:155px">View</div><div class="t" style="left:392px;top:155px">Shading</div><div class="t" style="left:450px;top:155px">Lighting</div><div class="t" style="left:508px;top:155px">Show</div><div class="t" style="left:552px;top:155px">Renderer</div><div class="t" style="left:614px;top:155px">Panels</div>
<div class="t" style="left:1066px;top:175px">0.00</div><div class="t" style="left:1127px;top:175px">1.00</div><div class="t" style="left:1187px;top:175px">sRGB gamma</div>
<div class="t" style="left:941px;top:921px;color:#e0e0e0;font-weight:bold;font-size:10px">persp</div>

<!-- right panel text -->
<div class="t" style="left:1596px;top:175px">Channels</div><div class="t" style="left:1659px;top:175px">Edit</div><div class="t" style="left:1694px;top:175px">Object</div><div class="t" style="left:1743px;top:175px">Show</div>
<div class="vt" style="left:1918px;top:162px;color:#dcdcdc;letter-spacing:-.07px">Channel Box / Layer Editor</div>
<div class="vt" style="left:1918px;top:318px;color:#808080">Modeling Toolkit</div>
<div class="vt" style="left:1918px;top:431px;color:#808080">Attribute Editor</div>
<div class="t" style="left:1600px;top:722px;color:#dcdcdc">Display</div><div class="t" style="left:1661px;top:722px;color:#7c7c7c">Anim</div>
<div class="t" style="left:1599px;top:740px">Layers</div><div class="t" style="left:1645px;top:740px">Options</div><div class="t" style="left:1702px;top:740px">Help</div>
<div class="t" style="left:1602px;top:788px">V</div><div class="t" style="left:1626px;top:788px">P</div><div class="t" style="left:1684px;top:788px;color:#ddd">Lion_Cub_Rigged</div>
<div class="t" style="left:1602px;top:808px">V</div><div class="t" style="left:1626px;top:808px">P</div><div class="t" style="left:1684px;top:808px;color:#ddd">Lion_Cub_Bones</div>
<div class="t" style="left:1602px;top:828px">V</div><div class="t" style="left:1626px;top:828px">P</div><div class="t" style="left:1684px;top:828px;color:#ddd">Lion_Cub_Controllers</div>

<!-- HUD -->
<div class="h" style="left:1577px;top:535px">кадров/с</div><div class="h" style="left:1643px;top:535px"><b>N/A</b></div>
<div class="b" style="left:1680px;top:530px;width:2px;height:20px;background:#8f8f8f"></div>
<div class="h" style="left:1696px;top:535px">ГП</div><div class="h" style="left:1719px;top:535px"><b>35</b> <b style="font-size:11px">%</b></div>
<div class="b" style="left:1759px;top:530px;width:2px;height:20px;background:#8f8f8f"></div>
<div class="h" style="left:1775px;top:535px">ЦП</div><div class="h" style="left:1804px;top:535px"><b>9</b> <b style="font-size:11px">%</b></div>
<div class="b" style="left:1839px;top:530px;width:2px;height:20px;background:#8f8f8f"></div>
<div class="h" style="left:1855px;top:535px">LAT</div><div class="h" style="left:1885px;top:535px"><b>N/A</b></div>

<!-- timeline labels -->
<div class="t d" style="left:76px;top:949px">5</div><div class="t d" style="left:142px;top:949px">10</div><div class="t d" style="left:209px;top:949px">15</div><div class="t d" style="left:275px;top:949px">20</div><div class="t d" style="left:342px;top:949px">25</div><div class="t d" style="left:408px;top:949px">30</div><div class="t d" style="left:475px;top:949px">35</div><div class="t d" style="left:541px;top:949px">40</div><div class="t d" style="left:608px;top:949px">45</div><div class="t d" style="left:674px;top:949px">50</div><div class="t d" style="left:741px;top:949px">55</div><div class="t d" style="left:807px;top:949px">60</div><div class="t d" style="left:874px;top:949px">65</div><div class="t d" style="left:940px;top:949px">70</div><div class="t d" style="left:1007px;top:949px">75</div><div class="t d" style="left:1073px;top:949px">80</div><div class="t d" style="left:1140px;top:949px">85</div><div class="t d" style="left:1206px;top:949px">90</div><div class="t d" style="left:1272px;top:949px">95</div><div class="t d" style="left:1339px;top:949px">100</div><div class="t d" style="left:1405px;top:949px">105</div><div class="t d" style="left:1472px;top:949px">110</div><div class="t d" style="left:1538px;top:949px">115</div><div class="t d" style="left:1605px;top:949px">120</div>
<div class="t" style="left:23px;top:965px;color:#eee">1</div>
<div class="t" style="left:1637px;top:958px">1</div>
<div class="t" style="left:19px;top:995px">1</div><div class="t" style="left:115px;top:995px">1</div><div class="t" style="left:233px;top:995px">1</div><div class="t" style="left:785px;top:995px">120</div>
<div class="t" style="left:1238px;top:995px">120</div><div class="t" style="left:1334px;top:995px">200</div>
<div class="t" style="left:1460px;top:995px">No Character Set</div><div class="t" style="left:1589px;top:995px">No Anim Layer</div><div class="t" style="left:1712px;top:995px">24 fps</div>
<div class="t" style="left:24px;top:1030px;color:#ddd">MEL</div>
<div class="t" style="left:24px;top:1061px;font-size:9.700px;letter-spacing:0">Select Tool: select an object</div>
</body></html>
